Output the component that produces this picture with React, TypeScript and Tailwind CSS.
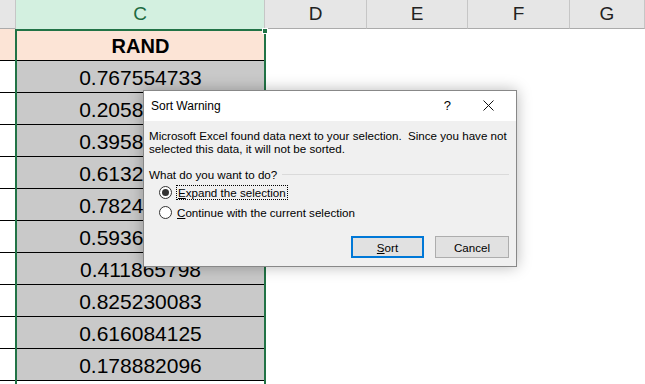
import React from 'react';

const values = [
  '0.767554733',
  '0.205813471',
  '0.395862219',
  '0.613259024',
  '0.782401836',
  '0.593617754',
  '0.411865798',
  '0.825230083',
  '0.616084125',
  '0.178882096',
];

const cellFont = { fontFamily: '"Liberation Sans", Arial, sans-serif' };

function HeaderCell({ label, w, active }: { label: string; w: string; active?: boolean }) {
  return (
    <div
      className={`${w} h-full flex items-center justify-center border-r border-[#c6c6c6] text-[19px] ${
        active ? 'bg-[#d3f0e0] text-[#1e6b41]' : 'bg-[#e6e6e6] text-[#222] border-b border-b-[#ababab]'
      }`}
    >
      {label}
    </div>
  );
}

function Radio({ checked }: { checked?: boolean }) {
  return (
    <span className="w-[13px] h-[13px] rounded-full border border-[#333] bg-white flex items-center justify-center shrink-0">
      {checked && <span className="w-[7px] h-[7px] rounded-full bg-[#333]" />}
    </span>
  );
}

function SortWarning() {
  return (
    <div
      className="absolute left-[143px] top-[90px] w-[374px] h-[177px] border border-[#888] bg-[#f0f0f0] shadow-[0_0_14px_rgba(0,0,0,0.28)] flex flex-col text-[11.6px] text-black"
      style={cellFont}
    >
      <div className="h-[30px] bg-white flex items-center pl-[7px] pr-[22px] shrink-0 text-[12px]">
        <span>Sort Warning</span>
        <span className="ml-auto mr-[32px] text-[13px]">?</span>
        <svg width="11" height="11" viewBox="0 0 11 11" className="mb-[1px]">
          <path d="M0.5 0.5 L10.5 10.5 M10.5 0.5 L0.5 10.5" stroke="#111" strokeWidth="1" fill="none" />
        </svg>
      </div>
      <div className="flex flex-col px-[5px] pt-[8px]">
        <p className="leading-[13px] whitespace-pre">
          {'Microsoft Excel found data next to your selection.  Since you have not\nselected this data, it will not be sorted.'}
        </p>
        <div className="flex items-center gap-[5px] mt-[11px]">
          <span className="whitespace-nowrap">What do you want to do?</span>
          <span className="flex-1 h-px bg-[#dadada] mr-[2px]" />
        </div>
        <div className="flex items-center gap-[4px] ml-[10px] mt-[2px] h-[15px]">
          <Radio checked />
          <span className="border border-dotted border-black px-[1px] leading-[13px]">
            <span className="underline">E</span>xpand the selection
          </span>
        </div>
        <div className="flex items-center gap-[5px] ml-[10px] mt-[5px] h-[15px]">
          <Radio />
          <span className="leading-[13px]">
            <span className="underline">C</span>ontinue with the current selection
          </span>
        </div>
        <div className="flex justify-end gap-[11px] mt-[16px] mr-[2px]">
          <button className="w-[73px] h-[22px] bg-[#e1e1e1] border-2 border-[#0078d7] flex items-center justify-center">
            <span>
              <span className="underline">S</span>ort
            </span>
          </button>
          <button className="w-[74px] h-[22px] bg-[#e1e1e1] border border-[#adadad] flex items-center justify-center">
            Cancel
          </button>
        </div>
      </div>
    </div>
  );
}

export default function App() {
  return (
    <div className="relative w-[645px] h-[384px] overflow-hidden bg-white" style={cellFont}>
      <div className="flex h-[29px]">
        <div className="w-[16px] h-full bg-[#e6e6e6] border-r border-[#c6c6c6] border-b border-b-[#ababab]" />
        <HeaderCell label="C" w="w-[249px]" active />
        <HeaderCell label="D" w="w-[102px]" />
        <HeaderCell label="E" w="w-[101px]" />
        <HeaderCell label="F" w="w-[102px]" />
        <HeaderCell label="G" w="flex-1" />
      </div>

      <div className="flex h-[32px]">
        <div className="w-[16px] bg-[#fce4d6] border-b border-black" />
        <div className="w-[249px] bg-[#fce4d6] border-b border-black flex items-center justify-center pt-[2px] text-[20px] font-bold text-black">
          RAND
        </div>
        <div className="flex-1" />
      </div>

      {values.map((v) => (
        <div key={v} className="flex h-[32px]">
          <div className="w-[16px] bg-white border-b border-black" />
          <div className="w-[249px] bg-[#c9c9c9] border-b border-black flex items-center justify-center pt-[3px] text-[21px] text-black">
            {v}
          </div>
          <div className="flex-1" />
        </div>
      ))}

      <div className="absolute left-[15px] top-[29px] w-[251px] h-[370px] border-2 border-[#217346] pointer-events-none" />
      <div className="absolute left-[262px] top-[28px] w-[6px] h-[6px] bg-[#217346] border border-white" />

      <SortWarning />
    </div>
  );
}
